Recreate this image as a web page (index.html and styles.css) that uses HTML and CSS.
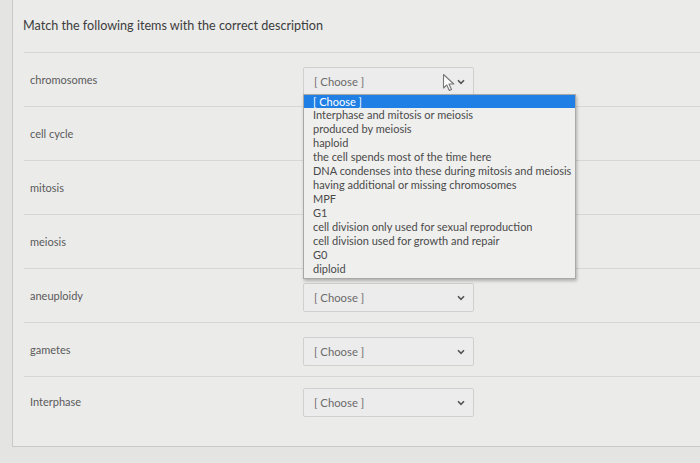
FILE: index.html
```html
<!DOCTYPE html>
<html lang="en">
<head>
    <meta charset="UTF-8">
    <meta name="viewport" content="width=device-width, initial-scale=1.0">
    <title>Matching Question</title>
    <link rel="stylesheet" href="styles.css">
</head>
<body>
    <div class="question">
        <p class="question-text">Match the following items with the correct description</p>

        <div class="answers">
            <div class="answer-row">
                <span class="answer-label">chromosomes</span>
                <div class="select-wrap">
                    <div class="select open">
                        <span>[ Choose ]</span>
                        <svg class="cursor" width="14" height="19" viewBox="0 0 14 19">
                            <path d="M1.5 1.5 L1.5 15 L4.8 12 L7.3 17.5 L9.5 16.5 L7 11 L11.8 11 Z" fill="#fbfbfb" stroke="#777" stroke-width="1.1" stroke-linejoin="round"/>
                        </svg>
                        <svg class="chevron" width="8" height="6" viewBox="0 0 8 6">
                            <path d="M1 1.2 L4 4.4 L7 1.2" fill="none" stroke="#555" stroke-width="1.6"/>
                        </svg>
                    </div>
                    <ul class="dropdown">
                        <li class="selected">[ Choose ]</li>
                        <li>Interphase and mitosis or meiosis</li>
                        <li>produced by meiosis</li>
                        <li>haploid</li>
                        <li>the cell spends most of the time here</li>
                        <li>DNA condenses into these during mitosis and meiosis</li>
                        <li>having additional or missing chromosomes</li>
                        <li>MPF</li>
                        <li>G1</li>
                        <li>cell division only used for sexual reproduction</li>
                        <li>cell division used for growth and repair</li>
                        <li>G0</li>
                        <li>diploid</li>
                    </ul>
                </div>
            </div>
            <div class="answer-row">
                <span class="answer-label">cell cycle</span>
            </div>
            <div class="answer-row">
                <span class="answer-label">mitosis</span>
            </div>
            <div class="answer-row">
                <span class="answer-label">meiosis</span>
            </div>
            <div class="answer-row">
                <span class="answer-label">aneuploidy</span>
                <div class="select-wrap">
                    <div class="select">
                        <span>[ Choose ]</span>
                        <svg class="chevron" width="8" height="6" viewBox="0 0 8 6">
                            <path d="M1 1.2 L4 4.4 L7 1.2" fill="none" stroke="#555" stroke-width="1.6"/>
                        </svg>
                    </div>
                </div>
            </div>
            <div class="answer-row">
                <span class="answer-label">gametes</span>
                <div class="select-wrap">
                    <div class="select">
                        <span>[ Choose ]</span>
                        <svg class="chevron" width="8" height="6" viewBox="0 0 8 6">
                            <path d="M1 1.2 L4 4.4 L7 1.2" fill="none" stroke="#555" stroke-width="1.6"/>
                        </svg>
                    </div>
                </div>
            </div>
            <div class="answer-row last">
                <span class="answer-label">Interphase</span>
                <div class="select-wrap">
                    <div class="select">
                        <span>[ Choose ]</span>
                        <svg class="chevron" width="8" height="6" viewBox="0 0 8 6">
                            <path d="M1 1.2 L4 4.4 L7 1.2" fill="none" stroke="#555" stroke-width="1.6"/>
                        </svg>
                    </div>
                </div>
            </div>
        </div>
    </div>
</body>
</html>
```

FILE: styles.css
```css
body {
    margin: 0;
    background-color: #e4e4e3;
    font-family: Lato, "Open Sans", sans-serif;
    color: #555;
}
.question {
    margin-left: 12px;
    height: 447px;
    box-sizing: border-box;
    border-left: 1px solid #c9c9c8;
    border-bottom: 1px solid #c9c9c8;
    background-color: #ebebea;
}
.question-text {
    margin: 0;
    padding: 18px 0 0 10px;
    height: 34px;
    font-size: 12.6px;
    color: #3c3c3c;
}
.answers {
    margin-left: 11px;
}
.answer-row {
    display: flex;
    align-items: center;
    height: 54px;
    border-top: 1px solid #d6d6d5;
    box-sizing: border-box;
}
.answer-row.last {
    height: 71px;
    align-items: flex-start;
}
.answer-row.last .answer-label {
    padding-top: 18px;
}
.answer-row.last .select-wrap {
    margin-top: 0;
    padding-top: 11px;
}
.answer-label {
    width: 273px;
    padding-left: 6px;
    font-size: 11px;
    color: #5a5a5a;
}
.select-wrap {
    position: relative;
    margin-top: 4px;
}
.select {
    display: flex;
    align-items: center;
    width: 171px;
    height: 29px;
    box-sizing: border-box;
    padding: 0 8px 0 10px;
    border: 1px solid #d0d0cf;
    border-radius: 2px;
    background-color: #edecec;
    font-size: 11.3px;
    color: #6a6a6a;
}
.select span {
    flex: 1;
}
.cursor {
    margin-right: 1px;
    margin-top: 2px;
}
.chevron {
    display: block;
}
.dropdown {
    position: absolute;
    top: 27px;
    left: 0;
    width: 271px;
    margin: 0;
    padding: 0 0 2px 0;
    list-style: none;
    border: 1px solid #a9a9a8;
    background-color: #efefee;
    box-shadow: 1px 2px 3px rgba(0, 0, 0, 0.25);
    z-index: 5;
}
.dropdown li {
    height: 14px;
    line-height: 14px;
    padding-left: 9px;
    font-size: 11px;
    color: #4a4a4a;
    white-space: nowrap;
}
.dropdown li.selected {
    height: 13px;
    line-height: 13px;
    background-color: #1f7fe5;
    color: #ffffff;
}
```
